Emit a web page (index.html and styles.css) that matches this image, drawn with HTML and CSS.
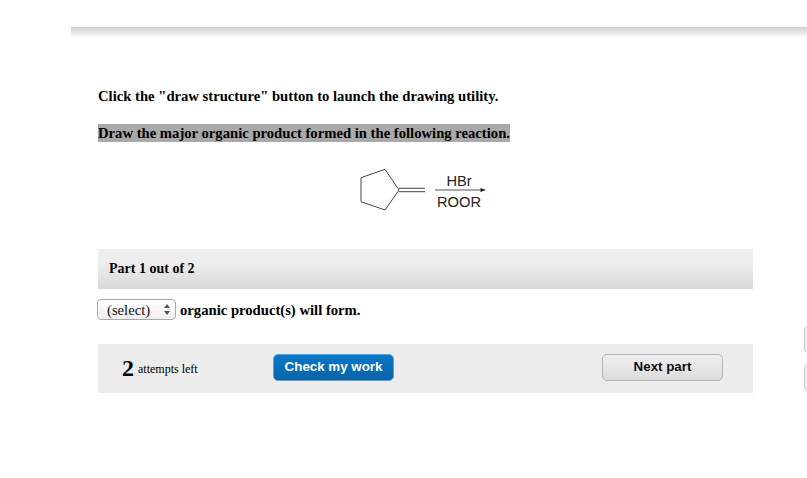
FILE: index.html
```html
<!DOCTYPE html>
<html lang="en">
<head>
    <meta charset="UTF-8">
    <meta name="viewport" content="width=device-width, initial-scale=1.0">
    <title>Draw structure</title>
    <link rel="stylesheet" href="styles.css">
</head>
<body>
    <div class="main">
        <div class="top-shade"></div>
        <div class="content">
            <p class="intro">Click the "draw structure" button to launch the drawing utility.</p>
            <p class="question"><span class="highlight">Draw the major organic product formed in the following reaction.</span></p>
            <div class="reaction">
                <svg width="130" height="52" viewBox="0 0 130 52">
                    <path class="bond" d="M25 5.3 L39 26 L25 46 L1 37.7 L1 13.7 Z"/>
                    <path class="bond" d="M39 24.3 H65 M39 27.7 H65"/>
                    <path class="arrow-line" d="M75 26 H122"/>
                    <path class="arrow-head" d="M120.5 24 L126 26 L120.5 28 Z"/>
                    <text class="label" x="99" y="22" text-anchor="middle">HBr</text>
                    <text class="label" x="99" y="43" text-anchor="middle">ROOR</text>
                </svg>
            </div>
            <div class="part-bar">Part 1 out of 2</div>
            <div class="answer-row">
                <div class="select-wrap">
                    <select class="product-select">
                        <option>(select)</option>
                    </select>
                    <span class="arrow-up"></span>
                    <span class="arrow-down"></span>
                </div>
                <span class="answer-text">organic product(s) will form.</span>
            </div>
            <div class="controls">
                <div class="attempts"><span class="attempts-no">2</span> attempts left</div>
                <button class="btn btn-check">Check my work</button>
                <button class="btn btn-next">Next part</button>
            </div>
        </div>
    </div>
    <div class="side-tab side-tab-one"></div>
    <div class="side-tab side-tab-two"></div>
</body>
</html>
```

FILE: styles.css
```css
body {
    margin: 0;
    height: 478px;
    overflow: hidden;
    background: #fff;
    color: #000;
    font-family: "Liberation Serif", serif;
    font-size: 14px;
    font-weight: bold;
}
.main {
    padding: 27px 0 0 71px;
}
.top-shade {
    height: 11px;
    background: linear-gradient(#cfcfcf, #fff);
}
.content {
    margin: 0 54px 0 27px;
}
.intro {
    margin: 49px 0 0;
    line-height: 18px;
    font-size: 14.67px;
}
.question {
    margin: 19px 0 0;
    line-height: 18px;
    font-size: 14.67px;
}
.highlight {
    background: #a9a9a9;
    padding: 1px 0;
}
.reaction {
    margin: 22px 0 0 262px;
    height: 57px;
}
.reaction svg {
    display: block;
}
.bond {
    fill: none;
    stroke: #444;
    stroke-width: 1;
}
.arrow-line {
    stroke: #555;
    stroke-width: 1.2;
}
.arrow-head {
    fill: #222;
}
.label {
    font-family: "Liberation Sans", sans-serif;
    font-size: 14.67px;
    font-weight: normal;
    fill: #222;
}
.part-bar {
    margin-top: 28px;
    height: 40px;
    line-height: 39px;
    padding-left: 11px;
    background: linear-gradient(#eeeeee 35%, #d8d8d8);
}
.answer-row {
    display: flex;
    align-items: center;
    gap: 4px;
    margin: 10px 0 0 -1px;
    height: 21px;
}
.answer-text {
    padding-top: 2px;
    font-size: 14.67px;
}
.select-wrap {
    position: relative;
    width: 79px;
    height: 21px;
}
.product-select {
    appearance: none;
    width: 79px;
    height: 21px;
    margin: 0;
    padding: 0 0 0 9px;
    border: 1px solid #aaa;
    border-radius: 4px;
    background: linear-gradient(#fff, #f0f0f0);
    font-family: "Liberation Serif", serif;
    font-size: 14.67px;
    color: #111;
}
.arrow-up,
.arrow-down {
    position: absolute;
    left: 67px;
    width: 0;
    height: 0;
    border-left: 3px solid transparent;
    border-right: 3px solid transparent;
}
.arrow-up {
    top: 5px;
    border-bottom: 4px solid #555;
}
.arrow-down {
    top: 12px;
    border-top: 4px solid #555;
}
.controls {
    display: flex;
    align-items: center;
    margin-top: 24px;
    height: 49px;
    background: #ececec;
    padding-left: 24px;
    padding-right: 30px;
}
.attempts {
    width: 151px;
    font-size: 12px;
    font-weight: normal;
}
.attempts-no {
    font-size: 24px;
    font-weight: bold;
    vertical-align: -3px;
    margin-right: 1px;
}
.btn {
    width: 121px;
    height: 27px;
    margin-top: -2px;
    padding: 0 0 3px;
    border-radius: 5px;
    font-family: "Liberation Sans", sans-serif;
    font-size: 13.33px;
    font-weight: bold;
}
.btn-check {
    border: 1px solid #5c9fd4;
    background: linear-gradient(#0a78c8, #0963a8);
    color: #fff;
}
.btn-next {
    margin-left: auto;
    border: 1px solid #b4b4b4;
    background: linear-gradient(#f0f0f0, #dcdcdc);
    color: #111;
}
.side-tab {
    position: absolute;
    left: 804px;
    width: 8px;
    height: 25px;
    border: 1px solid #ccc;
    border-radius: 4px;
    background: #f0f0f0;
}
.side-tab-one {
    top: 326px;
}
.side-tab-two {
    top: 364px;
}
```
